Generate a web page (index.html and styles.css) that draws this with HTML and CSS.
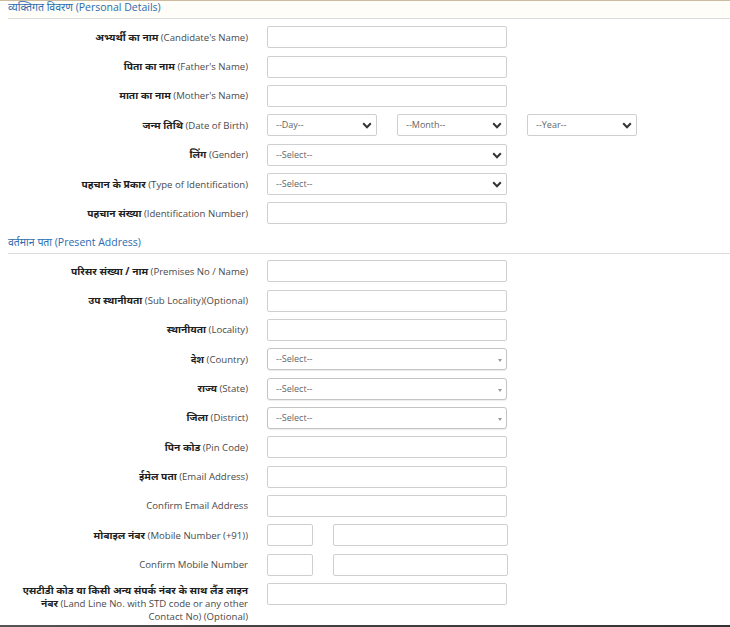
FILE: index.html
```html
<!DOCTYPE html>
<html lang="hi">
<head>
    <meta charset="UTF-8">
    <meta name="viewport" content="width=device-width, initial-scale=1.0">
    <title>आवेदन पत्र</title>
    <link rel="stylesheet" href="styles.css">
</head>
<body>
    <div class="page">
        <div class="section-title">व्यक्तिगत विवरण (Personal Details)</div>

        <div class="form-row">
            <label class="field-label"><b>अभ्यर्थी का नाम</b> (Candidate's Name)</label>
            <div class="fields"><input class="text-input" type="text"></div>
        </div>
        <div class="form-row">
            <label class="field-label"><b>पिता का नाम</b> (Father's Name)</label>
            <div class="fields"><input class="text-input" type="text"></div>
        </div>
        <div class="form-row">
            <label class="field-label"><b>माता का नाम</b> (Mother's Name)</label>
            <div class="fields"><input class="text-input" type="text"></div>
        </div>
        <div class="form-row">
            <label class="field-label"><b>जन्म तिथि</b> (Date of Birth)</label>
            <div class="fields">
                <div class="select select-small">--Day--<svg class="chevron" viewBox="0 0 10 7"><path d="M1.2 1.3 5 5.2 8.8 1.3"/></svg></div>
                <div class="select select-small">--Month--<svg class="chevron" viewBox="0 0 10 7"><path d="M1.2 1.3 5 5.2 8.8 1.3"/></svg></div>
                <div class="select select-small">--Year--<svg class="chevron" viewBox="0 0 10 7"><path d="M1.2 1.3 5 5.2 8.8 1.3"/></svg></div>
            </div>
        </div>
        <div class="form-row">
            <label class="field-label"><b>लिंग</b> (Gender)</label>
            <div class="fields"><div class="select">--Select--<svg class="chevron" viewBox="0 0 10 7"><path d="M1.2 1.3 5 5.2 8.8 1.3"/></svg></div></div>
        </div>
        <div class="form-row">
            <label class="field-label"><b>पहचान के प्रकार</b> (Type of Identification)</label>
            <div class="fields"><div class="select">--Select--<svg class="chevron" viewBox="0 0 10 7"><path d="M1.2 1.3 5 5.2 8.8 1.3"/></svg></div></div>
        </div>
        <div class="form-row">
            <label class="field-label"><b>पहचान संख्या</b> (Identification Number)</label>
            <div class="fields"><input class="text-input" type="text"></div>
        </div>

        <div class="section-title">वर्तमान पता (Present Address)</div>

        <div class="form-row">
            <label class="field-label"><b>परिसर संख्या / नाम</b> (Premises No / Name)</label>
            <div class="fields"><input class="text-input" type="text"></div>
        </div>
        <div class="form-row">
            <label class="field-label"><b>उप स्थानीयता</b> (Sub Locality)(Optional)</label>
            <div class="fields"><input class="text-input" type="text"></div>
        </div>
        <div class="form-row">
            <label class="field-label"><b>स्थानीयता</b> (Locality)</label>
            <div class="fields"><input class="text-input" type="text"></div>
        </div>
        <div class="form-row">
            <label class="field-label"><b>देश</b> (Country)</label>
            <div class="fields"><div class="combo">--Select--<span class="combo-arrow"></span></div></div>
        </div>
        <div class="form-row">
            <label class="field-label"><b>राज्य</b> (State)</label>
            <div class="fields"><div class="combo">--Select--<span class="combo-arrow"></span></div></div>
        </div>
        <div class="form-row">
            <label class="field-label"><b>जिला</b> (District)</label>
            <div class="fields"><div class="combo">--Select--<span class="combo-arrow"></span></div></div>
        </div>
        <div class="form-row">
            <label class="field-label"><b>पिन कोड</b> (Pin Code)</label>
            <div class="fields"><input class="text-input" type="text"></div>
        </div>
        <div class="form-row">
            <label class="field-label"><b>ईमेल पता</b> (Email Address)</label>
            <div class="fields"><input class="text-input" type="text"></div>
        </div>
        <div class="form-row">
            <label class="field-label">Confirm Email Address</label>
            <div class="fields"><input class="text-input" type="text"></div>
        </div>
        <div class="form-row">
            <label class="field-label"><b>मोबाइल नंबर</b> (Mobile Number (+91))</label>
            <div class="fields">
                <input class="text-input code-input" type="text">
                <input class="text-input phone-input" type="text">
            </div>
        </div>
        <div class="form-row">
            <label class="field-label">Confirm Mobile Number</label>
            <div class="fields">
                <input class="text-input code-input" type="text">
                <input class="text-input phone-input" type="text">
            </div>
        </div>
        <div class="form-row form-row-top">
            <label class="field-label"><b>एसटीडी कोड या किसी अन्य संपर्क नंबर के साथ लैंड लाइन</b> <b>नंबर</b> (Land Line No. with STD code or any other Contact No) (Optional)</label>
            <div class="fields"><input class="text-input" type="text"></div>
        </div>
    </div>
    <div class="footer-bar"></div>
</body>
</html>
```

FILE: styles.css
```css
body {
    margin: 0;
    background-color: #fff;
    font-family: "Open Sans", "Noto Sans", sans-serif;
    color: #444;
    height: 627px;
    overflow: hidden;
    border-top: 1px solid #cdbb9f;
    box-sizing: border-box;
}
.page {
    /* page is scrolled a few px, first heading sits under the top edge */
    margin-top: -4px;
    padding: 0 0 0 8px;
    height: 628px;
}
.section-title {
    font-size: 10.5px;
    line-height: 14px;
    color: #2b6cb0;
    padding: 3px 0 4px 0;
    border-bottom: 1px solid #ddd;
    margin-bottom: 6.5px;
}
.section-title:first-child {
    background-color: #fffdf7;
    margin-bottom: 7.3px;
}
.form-row {
    display: flex;
    align-items: center;
    margin-bottom: 7.35px;
}
.form-row-top {
    align-items: flex-start;
}
.form-row-top .field-label {
    padding-top: 1px;
    line-height: 13px;
}
.form-row-top .field-label b {
    line-height: 13px;
}
.field-label {
    width: 240px;
    flex-shrink: 0;
    text-align: right;
    font-size: 9.6px;
    line-height: 13px;
    color: #4a4a4a;
}
.field-label b {
    color: #1e1e1e;
    font-weight: 700;
    font-size: 10.2px;
    line-height: 12px;
}
.fields {
    display: flex;
    margin-left: 19px;
    gap: 20px;
}
.text-input {
    width: 240px;
    height: 22px;
    box-sizing: border-box;
    border: 1px solid #cfcfcf;
    border-radius: 2px;
    padding: 0 8px;
    margin: 0;
    background: #fff;
    font-family: inherit;
    outline: none;
}
.code-input {
    width: 46px;
}
.phone-input {
    width: 175px;
}
.select {
    position: relative;
    width: 240px;
    height: 22px;
    box-sizing: border-box;
    border: 1px solid #cfcfcf;
    border-radius: 2px;
    padding-left: 8px;
    font-size: 9px;
    line-height: 20px;
    color: #666;
    background: #fff;
}
.select-small {
    width: 110px;
}
.chevron {
    position: absolute;
    right: 4px;
    top: 7px;
    width: 10px;
    height: 7px;
    fill: none;
    stroke: #333;
    stroke-width: 2;
}
.combo {
    position: relative;
    width: 240px;
    height: 22px;
    box-sizing: border-box;
    border: 1px solid #c4c4c4;
    border-radius: 3px;
    box-shadow: 0 1px 1px rgba(0, 0, 0, 0.08);
    padding-left: 8px;
    font-size: 9px;
    line-height: 20px;
    color: #666;
    background: #fff;
}
.combo-arrow {
    position: absolute;
    right: 4px;
    top: 10px;
    border-left: 2.5px solid transparent;
    border-right: 2.5px solid transparent;
    border-top: 3px solid #999;
}
.footer-bar {
    height: 2px;
    background: linear-gradient(to right, #555, #444 30%, #333);
}
```
